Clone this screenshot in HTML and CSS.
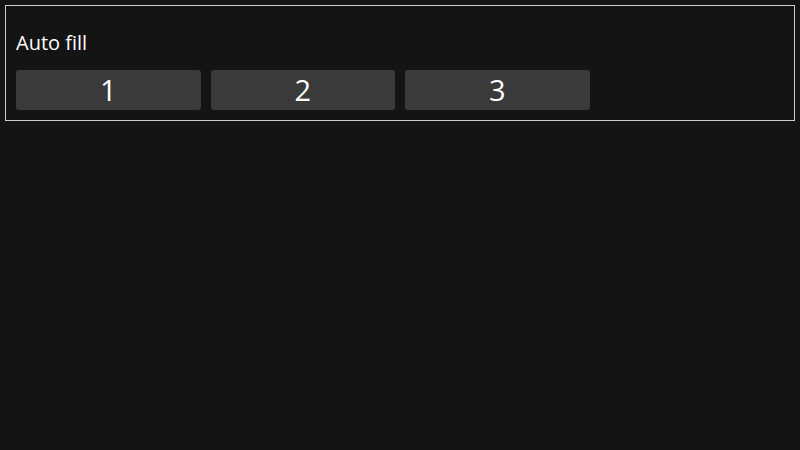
FILE: index.html
```html
<!DOCTYPE html>
<html lang="en">

<head>
    <meta charset="UTF-8">
    <meta name="viewport" content="width=device-width, initial-scale=1.0">
    <title>Auto fill</title>
    <link rel="stylesheet" href="styles.css">
</head>

<body>
    <section class="panel">
        <h2 class="panel-title">Auto fill</h2>
        <div class="tile-grid">
            <div class="tile">1</div>
            <div class="tile">2</div>
            <div class="tile">3</div>
        </div>
    </section>
</body>

</html>
```

FILE: styles.css
```css
body {
    font-family: 'Open Sans', sans-serif;
    margin: 0;
    padding: 5px;
    background-color: #141414;
    color: #FFF;
}

.panel {
    border: 1px solid #ccc;
    padding: 10px;
}

.panel-title {
    font-size: 20px;
    font-weight: normal;
    line-height: 28px;
    margin: 13px 0 13px;
}

.tile-grid {
    display: grid;
    grid-template-columns: repeat(auto-fill, minmax(180px, 1fr));
    gap: 10px;
}

.tile {
    background-color: #3a3a3a;
    border-radius: 3px;
    height: 40px;
    line-height: 40px;
    text-align: center;
    font-size: 29px;
}
```
